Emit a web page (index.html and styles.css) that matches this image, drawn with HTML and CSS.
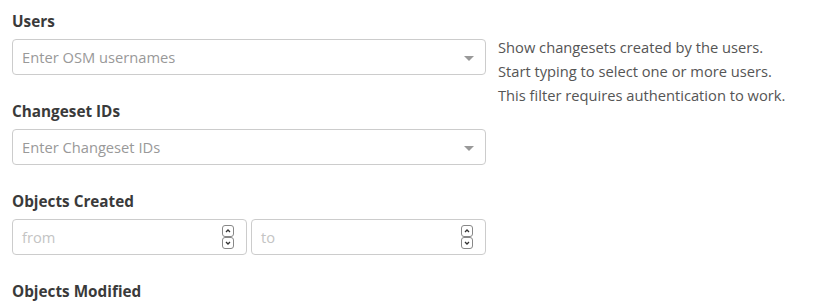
FILE: index.html
```html
<!DOCTYPE html>
<html lang="en">
<head>
  <meta charset="UTF-8">
  <title>Filters</title>
  <link rel="stylesheet" href="styles.css">
</head>
<body>
  <div class="form">
    <div class="field">
      <label class="label">Users</label>
      <div class="select"><span class="ph">Enter OSM usernames</span><span class="caret"></span></div>
    </div>
    <div class="help">
      Show changesets created by the users.<br>
      Start typing to select one or more users.<br>
      This filter requires authentication to work.
    </div>

    <div class="field">
      <label class="label">Changeset IDs</label>
      <div class="select"><span class="ph">Enter Changeset IDs</span><span class="caret"></span></div>
    </div>

    <div class="field">
      <label class="label">Objects Created</label>
      <div class="range">
        <div class="num">
          <span class="ph light">from</span>
          <span class="spin">
            <i><svg viewBox="0 0 10 10"><path d="M3 6 L5 4 L7 6"/></svg></i>
            <i><svg viewBox="0 0 10 10"><path d="M3 4 L5 6 L7 4"/></svg></i>
          </span>
        </div>
        <div class="num">
          <span class="ph light">to</span>
          <span class="spin">
            <i><svg viewBox="0 0 10 10"><path d="M3 6 L5 4 L7 6"/></svg></i>
            <i><svg viewBox="0 0 10 10"><path d="M3 4 L5 6 L7 4"/></svg></i>
          </span>
        </div>
      </div>
    </div>

    <div class="field">
      <label class="label">Objects Modified</label>
    </div>
  </div>
</body>
</html>
```

FILE: styles.css
```css
body { margin: 0; padding: 12px 12px 0; font-family: "Open Sans", sans-serif; font-size: 14.7px; color: #333; background: #fff; }
.form { display: grid; grid-template-columns: 474px auto; column-gap: 12px; row-gap: 27px; align-items: start; }
.field { grid-column: 1; }
.help { grid-column: 2; grid-row: 1 / span 2; padding-top: 23px; color: #555; line-height: 24px; }
.label { display: block; font-weight: bold; font-size: 15.3px; line-height: 19px; margin-bottom: 8px; color: #3a3a3a; }
.select, .num { box-sizing: border-box; height: 36px; border: 1px solid #ccc; border-radius: 4px; display: flex; align-items: center; padding: 0 10px 0 9px; justify-content: space-between; }
.ph { color: #999; }
.ph.light { color: #c4c4c4; }
.caret { width: 0; height: 0; border-left: 5px solid transparent; border-right: 5px solid transparent; border-top: 5px solid #999; margin-right: 1px; margin-top: 2px; }
.range { display: flex; gap: 4px; }
.num { flex: 1; padding-right: 12px; }
.spin { display: flex; flex-direction: column; margin-top: -1px; }
.spin i { box-sizing: border-box; display: block; width: 12px; height: 12px; border: 1px solid #888; border-radius: 3px; }
.spin svg { display: block; width: 10px; height: 10px; fill: none; stroke: #333; stroke-width: 1.3; }
```
